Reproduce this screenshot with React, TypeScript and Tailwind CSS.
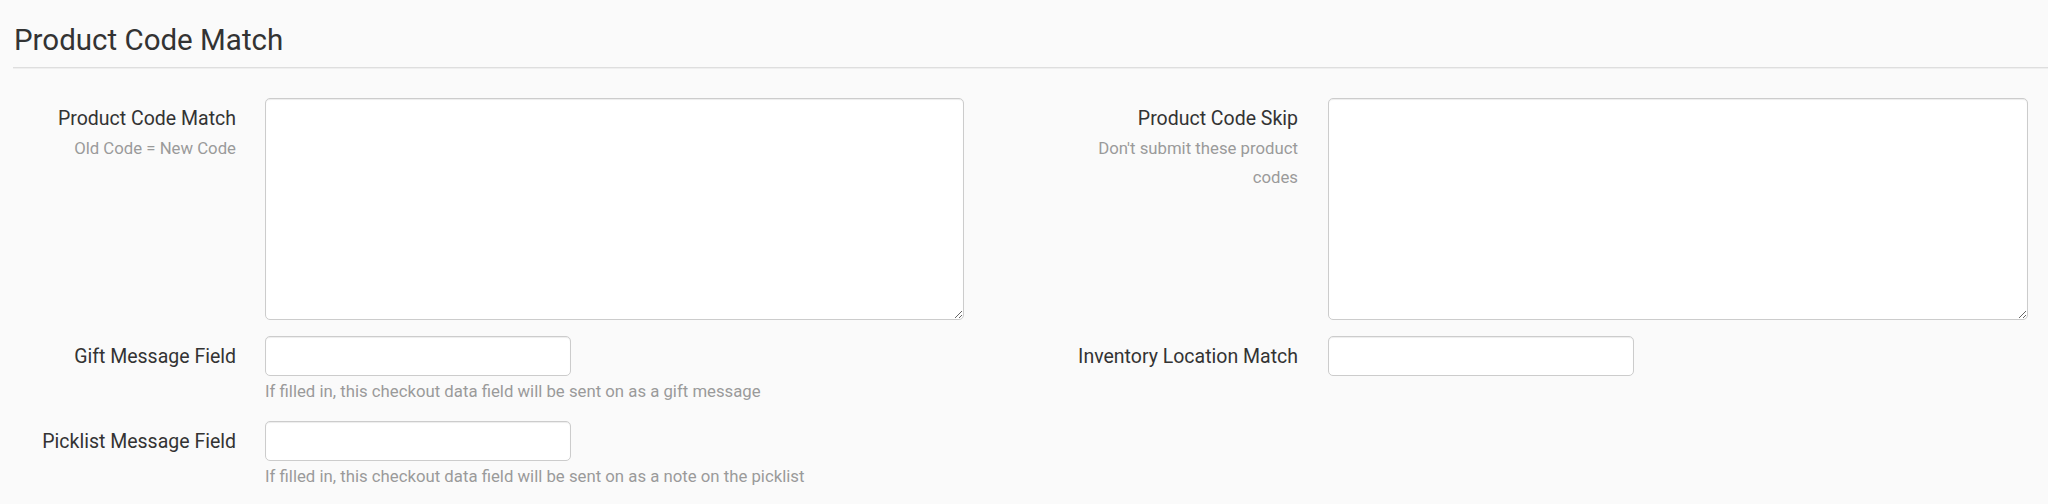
import React from "react";

const labelCls =
  "w-[221px] shrink-0 text-right text-[19.5px] leading-[28px] pt-[7px] text-[#333333]";
const helpCls = "text-[16.75px] leading-[29px] text-[#9a9a9a]";
const inputCls =
  "h-[40px] w-[306px] rounded-[5px] border border-[#cccccc] bg-white shadow-[inset_0_1px_1px_rgba(0,0,0,0.075)] outline-none";
const areaCls =
  "h-[222px] rounded-[5px] border border-[#cccccc] bg-white shadow-[inset_0_1px_1px_rgba(0,0,0,0.075)] outline-none";

export default function App() {
  return (
    <div className="w-[2048px] h-[504px] overflow-hidden bg-[#fafafa] font-['Roboto',sans-serif]">
      <h2 className="pl-[14px] pt-[24px] text-[29.5px] leading-[32px] font-normal text-[#333333]">
        Product Code Match
      </h2>
      <div className="ml-[13px] mt-[11px] h-[2px] border-t border-[#dedede] bg-[#efefef]" />

      <div className="pl-[15px] pt-[29px]">
        {/* Row 1 */}
        <div className="flex items-start">
          <div className={labelCls}>
            <div>Product Code Match</div>
            <div className={helpCls + " mt-px"}>Old Code = New Code</div>
          </div>
          <textarea className={areaCls + " ml-[29px] w-[699px]"} />
          <div className={labelCls + " ml-[113px]"}>
            <div>Product Code Skip</div>
            <div className={helpCls + " mt-px"}>Don't submit these product codes</div>
          </div>
          <textarea className={areaCls + " ml-[30px] w-[700px]"} />
        </div>

        {/* Row 2 */}
        <div className="mt-[16px] flex items-start">
          <div className={labelCls}>Gift Message Field</div>
          <div className="ml-[29px] w-[699px]">
            <input className={inputCls} />
            <div className={helpCls + " mt-px"}>
              If filled in, this checkout data field will be sent on as a gift message
            </div>
          </div>
          <div className={labelCls + " ml-[113px]"}>Inventory Location Match</div>
          <div className="ml-[30px] w-[700px]">
            <input className={inputCls} />
          </div>
        </div>

        {/* Row 3 */}
        <div className="mt-[15px] flex items-start">
          <div className={labelCls}>Picklist Message Field</div>
          <div className="ml-[29px] w-[699px]">
            <input className={inputCls} />
            <div className={helpCls + " mt-px"}>
              If filled in, this checkout data field will be sent on as a note on the picklist
            </div>
          </div>
        </div>
      </div>
    </div>
  );
}
